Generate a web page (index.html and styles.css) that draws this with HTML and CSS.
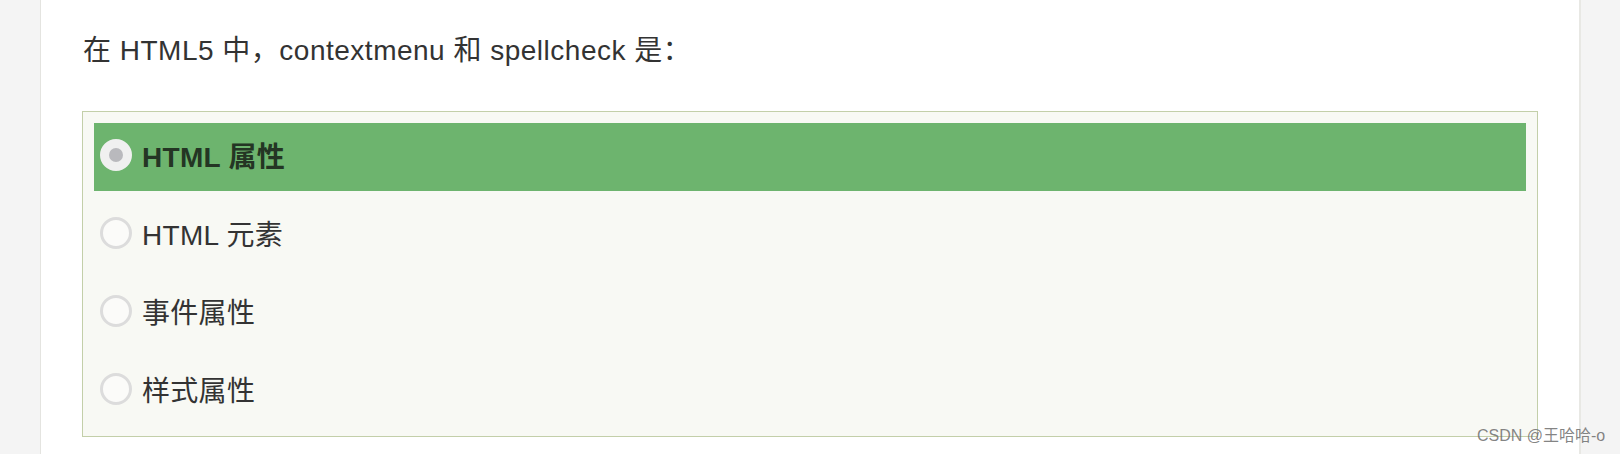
FILE: index.html
```html
<!DOCTYPE html>
<html lang="zh-CN">
<head>
<meta charset="utf-8">
<title>HTML5 quiz</title>
<link rel="stylesheet" href="styles.css">
</head>
<body>
<div class="page">
  <div class="question">在 HTML5 中，contextmenu 和 spellcheck 是：</div>
  <div class="options">
    <label class="option selected"><span class="radio"><span class="dot"></span></span><span class="text">HTML 属性</span></label>
    <label class="option"><span class="radio"></span><span class="text">HTML 元素</span></label>
    <label class="option"><span class="radio"></span><span class="text">事件属性</span></label>
    <label class="option"><span class="radio"></span><span class="text">样式属性</span></label>
  </div>
</div>
<div class="watermark">CSDN @王哈哈-o</div>
</body>
</html>
```
FILE: styles.css
```css
html, body {
  margin: 0;
  padding: 0;
}
body {
  background: #f4f4f4;
  width: 1620px;
  height: 454px;
  overflow: hidden;
  position: relative;
  font-family: "Liberation Sans", "Noto Sans CJK SC", sans-serif;
  color: #333;
}
.page {
  margin-left: 40px;
  width: 1541px;
  height: 454px;
  box-sizing: border-box;
  background: #fff;
  border-left: 1px solid #e4e4e0;
  border-right: 2px solid #e8e8e4;
  padding: 30px 41px 0 41px;
}
.question {
  font-size: 28px;
  letter-spacing: 0.5px;
  line-height: 42px;
  padding-left: 1px;
  margin-bottom: 39px;
  color: #333;
}
.options {
  background: #f8f9f4;
  border: 1px solid #c3cfa9;
  padding: 11px;
  display: flex;
  flex-direction: column;
  gap: 10px;
}
.option {
  height: 68px;
  box-sizing: border-box;
  padding-bottom: 5px;
  display: flex;
  align-items: center;
  gap: 10px;
  padding-left: 6px;
  font-size: 28px;
  letter-spacing: 0.3px;
  color: #333;
}
.option.selected {
  background: #6db46e;
  font-weight: bold;
  color: #243524;
}
.radio {
  width: 32px;
  height: 32px;
  flex: none;
  box-sizing: border-box;
  border-radius: 50%;
  border: 3px solid #dcdcdc;
  background: #fbfbf9;
  display: flex;
  align-items: center;
  justify-content: center;
}
.selected .radio {
  border-color: #f0f0f0;
  background: #f0f0f0;
}
.dot {
  width: 14px;
  height: 14px;
  border-radius: 50%;
  background: #b9b9bd;
}
.watermark {
  position: absolute;
  left: 1477px;
  top: 425px;
  font-size: 16px;
  line-height: 22px;
  color: rgba(110, 110, 110, 0.85);
  white-space: nowrap;
}
```
